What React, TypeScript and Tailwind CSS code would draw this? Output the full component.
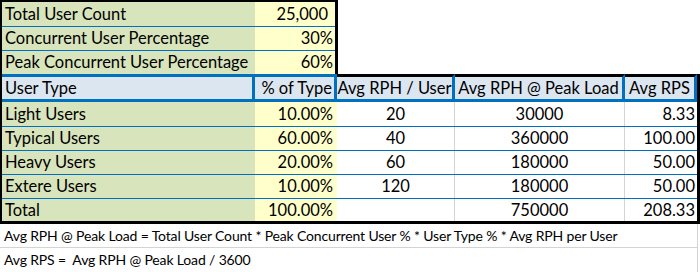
import React from "react";

const BLUE = "border-[#0070C0]";

const topRows = [
  { label: "Total User Count", value: "25,000", pad: true },
  { label: "Concurrent User Percentage", value: "30%" },
  { label: "Peak Concurrent User Percentage", value: "60%" },
];

const dataRows = [
  ["Light Users", "10.00%", "20", "30000", "8.33"],
  ["Typical Users", "60.00%", "40", "360000", "100.00"],
  ["Heavy Users", "20.00%", "60", "180000", "50.00"],
  ["Extere Users", "10.00%", "120", "180000", "50.00"],
  ["Total", "100.00%", "", "750000", "208.33"],
];

export default function App() {
  const rowHeights = ["h-[25px]", "h-[24px]", "h-[24px]", "h-[24px]", "h-[22px]"];
  return (
    <div
      className="w-[700px] h-[272px] bg-white text-black text-[16.5px] leading-none overflow-hidden"
      style={{ fontFamily: "Lato, 'Noto Sans', sans-serif" }}
    >
      {/* top parameter block */}
      <div className="w-[338px] border-l-2 border-t-2 border-r-[3px] border-black flex flex-col">
        {topRows.map((r, i) => (
          <div
            key={r.label}
            className={`flex ${i === 0 ? "h-[25px] border-b" : i === 1 ? "h-[24px] border-b" : "h-[23px]"} ${BLUE}`}
          >
            <div className="w-[253px] bg-[#D8E4BC] flex items-center pl-[3px]">{r.label}</div>
            <div
              className={`flex-1 bg-[#FFFFCC] flex items-center justify-end ${r.pad ? "pr-[7px]" : "pr-[2px]"}`}
            >
              {r.value}
            </div>
          </div>
        ))}
      </div>

      {/* main table */}
      <div className="w-[700px] border-l-2 border-r-[3px] border-b-[3px] border-black">
        <div className="grid grid-cols-[253px_82px_118px_170px_1fr] h-[28px] bg-[#DCE6F1]">
          <div className={`border-t-[3px] border-b-[3px] border-r-[3px] ${BLUE} flex items-center pl-[3px]`}>
            User Type
          </div>
          <div className={`border-t-[3px] border-b-[3px] border-r-[3px] ${BLUE} flex items-center justify-end pr-[2px]`}>
            % of Type
          </div>
          <div className="border-t-[3px] border-t-black border-b-[3px] border-b-[#0070C0] border-r-[3px] border-r-[#0070C0] flex items-center justify-center">
            Avg RPH / User
          </div>
          <div className="border-t-[3px] border-t-black border-b-[3px] border-b-[#0070C0] border-r-[3px] border-r-[#0070C0] flex items-center justify-center">
            Avg RPH @ Peak Load
          </div>
          <div className="border-t-[3px] border-t-black border-b-[3px] border-b-[#0070C0] border-r-[3px] border-r-[#0070C0] flex items-center justify-center">
            Avg RPS
          </div>
        </div>
        {dataRows.map((r, i) => {
          const last = i === dataRows.length - 1;
          return (
            <div
              key={r[0]}
              className={`grid grid-cols-[253px_82px_118px_170px_1fr] ${rowHeights[i]} ${last ? "" : `border-b ${BLUE}`}`}
            >
              <div className="bg-[#D8E4BC] flex items-center pl-[3px]">{r[0]}</div>
              <div className="bg-[#FFFFCC] flex items-center justify-end pr-[4px]">{r[1]}</div>
              <div className="border-r border-[#D4D4D4] flex items-center justify-center">{r[2]}</div>
              <div className="border-r border-[#D4D4D4] flex items-center justify-center">{r[3]}</div>
              <div className="flex items-center justify-end pr-[2px]">{r[4]}</div>
            </div>
          );
        })}
      </div>

      {/* footnotes */}
      <div className="w-[698px] h-[24px] border-b border-r border-[#D4D4D4] flex items-center pl-[4px] whitespace-pre text-[14px] tracking-[-0.15px]">
        Avg RPH @ Peak Load = Total User Count * Peak Concurrent User % * User Type % * Avg RPH per User
      </div>
      <div className="w-[698px] h-[24px] border-r border-[#D4D4D4] flex items-center pl-[4px] whitespace-pre text-[14px] tracking-[-0.15px]">
        Avg RPS =  Avg RPH @ Peak Load / 3600
      </div>
    </div>
  );
}
